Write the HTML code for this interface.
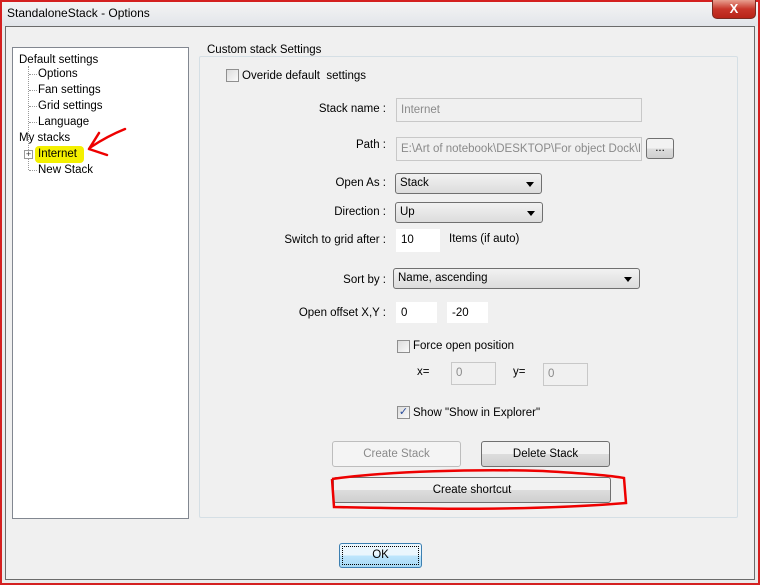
<!DOCTYPE html>
<html><head><style>
*{box-sizing:border-box;margin:0;padding:0}
body{width:760px;height:585px;overflow:hidden;font-family:"Liberation Sans",sans-serif;font-size:11.5px;color:#000;background:#e8e8e8;position:relative}
.a{position:absolute}
.win{left:0;top:0;width:760px;height:585px;border:2px solid #d42020;background:#eaeaea}
.title{left:2px;top:2px;width:756px;height:24px;background:linear-gradient(#f4f4f4,#e2e5ea);}
.client{left:5px;top:26px;width:750px;height:554px;background:#f0f0f0;border:1px solid #6b6b6b}
.close{left:712px;top:0;width:44px;height:19px;border:1px solid #7a2a20;border-top:none;border-radius:0 0 5px 5px;background:linear-gradient(#e8a090,#c8362a 50%,#b82418);color:#fff;font-weight:bold;font-size:13px;text-align:center;line-height:17px}
.tree{left:12px;top:47px;width:177px;height:472px;background:#fff;border:1px solid #828790}
.grp{left:199px;top:56px;width:539px;height:462px;border:1px solid #d5dfe5;border-radius:2px}
.lbl{text-align:right;width:200px}
.inp{background:#fff;border:1px solid #abadb3;padding:0 0 0 4px;line-height:20px}
.dis{background:#f0f0f0;border:1px solid #c8c8c8;color:#8a8a8a}
.sel{border:1px solid #707070;border-radius:3px;background:linear-gradient(#f2f2f2,#dcdcdc);padding-left:4px;line-height:19px}
.sel:after{content:"";position:absolute;right:7px;top:8px;border:4px solid transparent;border-top:5px solid #000;border-bottom:none}
.btn{border:1px solid #707070;border-radius:3px;background:linear-gradient(#f2f2f2 50%,#dddddd 50%,#cfcfcf);text-align:center}
.cb{width:13px;height:13px;border:1px solid #8f8f8f;background:linear-gradient(135deg,#dcdcdc,#fafafa)}
.dot{border-top:1px dotted #999;width:8px}
</style></head><body>
<div class="a win"></div>
<div class="a title"></div>
<div class="a" style="left:7px;top:6px;font-size:12px">StandaloneStack - Options</div>
<div class="a close">X</div>
<div class="a client"></div>
<div class="a tree"></div>
<div class="a" style="left:19px;top:52px;line-height:16px">Default settings</div>
<div class="a" style="left:28px;top:66px;height:104px;border-left:1px dotted #999"></div>
<div class="a dot" style="left:29px;top:74px"></div><div class="a" style="left:38px;top:68px">Options</div>
<div class="a dot" style="left:29px;top:90px"></div><div class="a" style="left:38px;top:84px">Fan settings</div>
<div class="a dot" style="left:29px;top:106px"></div><div class="a" style="left:38px;top:100px">Grid settings</div>
<div class="a dot" style="left:29px;top:122px"></div><div class="a" style="left:38px;top:116px">Language</div>
<div class="a" style="left:19px;top:132px">My stacks</div>
<div class="a" style="left:35px;top:146px;width:49px;height:17px;background:#f4f000;border-radius:4px"></div>
<div class="a" style="left:24px;top:150px;width:9px;height:9px;border:1px solid #999;background:#fff;font-size:9px;line-height:7px;text-align:center;color:#333">+</div>
<div class="a" style="left:38px;top:148px">Internet</div>
<div class="a dot" style="left:29px;top:170px"></div><div class="a" style="left:38px;top:164px">New Stack</div>
<svg class="a" style="left:85px;top:125px" width="45" height="35"><path d="M40 4 C30 8 18 14 6 22 M4 24 L14 8 M4 24 L22 30" stroke="#e00" stroke-width="2.5" fill="none" stroke-linecap="round"/></svg>
<div class="a grp"></div>
<div class="a" style="left:204px;top:44px;background:#f0f0f0;padding:0 3px">Custom stack Settings</div>
<div class="a cb" style="left:226px;top:69px"></div><div class="a" style="left:242px;top:70px">Overide default&nbsp; settings</div>
<div class="a lbl" style="left:186px;top:103px">Stack name :</div>
<div class="a inp dis" style="left:396px;top:98px;width:246px;height:24px;line-height:22px">Internet</div>
<div class="a lbl" style="left:186px;top:139px">Path :</div>
<div class="a inp dis" style="left:396px;top:137px;width:246px;height:24px;line-height:22px;overflow:hidden;white-space:nowrap">E:\Art of notebook\DESKTOP\For object Dock\Inte</div>
<div class="a btn" style="left:646px;top:138px;width:28px;height:21px;line-height:19px">...</div>
<div class="a lbl" style="left:186px;top:177px">Open As :</div>
<div class="a sel" style="left:395px;top:173px;width:147px;height:21px">Stack</div>
<div class="a lbl" style="left:186px;top:206px">Direction :</div>
<div class="a sel" style="left:395px;top:202px;width:148px;height:21px">Up</div>
<div class="a lbl" style="left:186px;top:234px">Switch to grid after :</div>
<div class="a inp" style="left:396px;top:229px;width:44px;height:23px;border-color:#fff">10</div>
<div class="a" style="left:449px;top:233px">Items (if auto)</div>
<div class="a lbl" style="left:186px;top:274px">Sort by :</div>
<div class="a sel" style="left:393px;top:268px;width:247px;height:21px">Name, ascending</div>
<div class="a lbl" style="left:186px;top:307px">Open offset X,Y :</div>
<div class="a inp" style="left:396px;top:302px;width:41px;height:21px;border-color:#fff">0</div>
<div class="a inp" style="left:447px;top:302px;width:41px;height:21px;border-color:#fff">-20</div>
<div class="a cb" style="left:397px;top:340px"></div><div class="a" style="left:413px;top:340px">Force open position</div>
<div class="a" style="left:417px;top:366px">x=</div>
<div class="a inp dis" style="left:451px;top:362px;width:45px;height:23px">0</div>
<div class="a" style="left:513px;top:366px">y=</div>
<div class="a inp dis" style="left:543px;top:363px;width:45px;height:23px">0</div>
<div class="a cb" style="left:397px;top:406px;font-size:11px;line-height:11px;color:#2a4c9a;text-align:center">✓</div><div class="a" style="left:413px;top:407px">Show "Show in Explorer"</div>
<div class="a btn" style="left:332px;top:441px;width:129px;height:26px;line-height:24px;border-color:#bdbdbd;background:#f4f4f4;color:#8a8a8a">Create Stack</div>
<div class="a btn" style="left:481px;top:441px;width:129px;height:26px;line-height:24px">Delete Stack</div>
<div class="a btn" style="left:333px;top:477px;width:278px;height:26px;line-height:24px">Create shortcut</div>
<svg class="a" style="left:328px;top:467px" width="305" height="46"><path d="M4 12 C60 4 150 2 215 4 C250 6 280 8 296 11 L298 36 C200 44 100 42 6 40 L4 12" stroke="#e00" stroke-width="2.5" fill="none"/></svg>
<div class="a btn" style="left:339px;top:543px;width:83px;height:25px;line-height:23px;border-color:#3c7fb1;background:linear-gradient(#eaf6fd 50%,#bee6fd 50%,#a7d9f5);outline:1px dotted #000;outline-offset:-4px">OK</div>
</body></html>
